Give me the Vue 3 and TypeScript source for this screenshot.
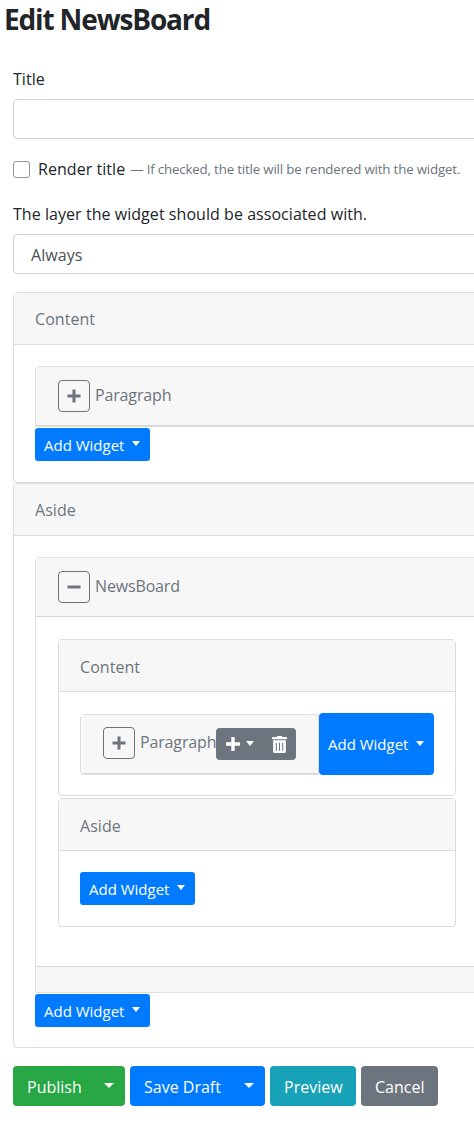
<script setup lang="ts">
const footerButtons = [
  { label: 'Preview', cls: 'teal' },
  { label: 'Cancel', cls: 'gray' },
]
</script>

<template>
  <div class="page">
    <h1 class="title">Edit NewsBoard</h1>
    <form class="form" @submit.prevent>
      <label class="label first">Title</label>
      <input class="control" type="text" />
      <div class="check-row">
        <input class="check" type="checkbox" />
        <span class="check-label">Render title</span>
        <small class="hint">— If checked, the title will be rendered with the widget.</small>
      </div>
      <label class="label layer">The layer the widget should be associated with.</label>
      <div class="control select">Always</div>

      <section class="card first-card">
        <header class="card-head">Content</header>
        <div class="card-body">
          <div class="widget">
            <div class="widget-head">
              <span class="toggle">
                <svg viewBox="0 0 16 16" class="sign"><path d="M6.500 1.500h3v5h5v3h-5v5h-3v-5h-5v-3h5z" /></svg>
              </span>
              <span class="widget-name">Paragraph</span>
            </div>
          </div>
          <button type="button" class="btn-add">Add Widget<i class="caret"></i></button>
        </div>
      </section>

      <section class="card second-card">
        <header class="card-head">Aside</header>
        <div class="card-body">
          <div class="widget">
            <div class="widget-head open">
              <span class="toggle">
                <svg viewBox="0 0 16 16" class="sign"><path d="M1.500 6.500h13v3h-13z" /></svg>
              </span>
              <span class="widget-name">NewsBoard</span>
            </div>
            <div class="widget-body">
              <section class="card inner">
                <header class="card-head">Content</header>
                <div class="card-body inline">
                  <div class="widget small">
                    <div class="widget-head">
                      <span class="toggle">
                        <svg viewBox="0 0 16 16" class="sign"><path d="M6.500 1.500h3v5h5v3h-5v5h-3v-5h-5v-3h5z" /></svg>
                      </span>
                      <span class="widget-name">Paragraph</span>
                    </div>
                    <div class="tools">
                      <svg viewBox="0 0 16 16" class="tool-plus"><path d="M6.300 1h3.400v5.300H15v3.400H9.700V15H6.300V9.700H1V6.300h5.300z" /></svg>
                      <i class="caret tool-caret"></i>
                      <svg viewBox="0 0 448 512" class="tool-trash"><path d="M32 464a48 48 0 0 0 48 48h288a48 48 0 0 0 48-48V128H32zm272-256a16 16 0 0 1 32 0v224a16 16 0 0 1-32 0zm-96 0a16 16 0 0 1 32 0v224a16 16 0 0 1-32 0zm-96 0a16 16 0 0 1 32 0v224a16 16 0 0 1-32 0zM432 32H312l-9.400-18.700A24 24 0 0 0 281.100 0H166.800a23.700 23.700 0 0 0-21.400 13.300L136 32H16A16 16 0 0 0 0 48v32a16 16 0 0 0 16 16h416a16 16 0 0 0 16-16V48a16 16 0 0 0-16-16z" /></svg>
                    </div>
                  </div>
                  <button type="button" class="btn-add tall">Add Widget<i class="caret"></i></button>
                </div>
              </section>
              <section class="card inner">
                <header class="card-head">Aside</header>
                <div class="card-body">
                  <button type="button" class="btn-add">Add Widget<i class="caret"></i></button>
                </div>
              </section>
            </div>
            <div class="widget-foot"></div>
          </div>
          <button type="button" class="btn-add">Add Widget<i class="caret"></i></button>
        </div>
      </section>

      <div class="actions">
        <button type="button" class="btn green publish">Publish<i class="caret big"></i></button>
        <button type="button" class="btn blue draft">Save Draft<i class="caret big"></i></button>
        <button v-for="b in footerButtons" :key="b.label" type="button" class="btn" :class="b.cls">{{ b.label }}</button>
      </div>
    </form>
  </div>
</template>

<style>
html, body { margin: 0; background: #fff; }
</style>

<style scoped>
.page {
  width: 474px;
  height: 1142px;
  overflow: hidden;
  font-family: "Open Sans", "Noto Sans", sans-serif;
  font-size: 16px;
  letter-spacing: 0.05px;
  color: #212529;
  box-sizing: border-box;
}
.title {
  margin: 0 0 0 4px;
  height: 38px;
  line-height: 38px;
  font-size: 28px;
  font-weight: 700;
  letter-spacing: -1.15px;
  white-space: nowrap;
}
.form { width: 490px; margin-left: 13px; }
.label { display: block; height: 24px; line-height: 24px; white-space: nowrap; }
.label.first { margin-top: 29px; margin-bottom: 8px; }
.label.layer { margin-top: 23px; margin-bottom: 8px; }
.control {
  display: block;
  box-sizing: border-box;
  width: 100%;
  height: 40px;
  margin: 0;
  padding: 0 17px;
  border: 1px solid #ced4da;
  border-radius: 4px;
  background: #fff;
  color: #495057;
  line-height: 40px;
  outline: none;
}
.check-row { display: flex; align-items: center; height: 20px; margin-top: 20px; white-space: nowrap; }
.check {
  appearance: none;
  box-sizing: border-box;
  width: 17px;
  height: 17px;
  margin: 0 8px 0 0;
  border: 1px solid #8f959b;
  border-radius: 3px;
  background: #fff;
  flex: none;
}
.hint { margin-left: 5px; font-size: 13.300px; color: #6c757d; letter-spacing: -0.17px; }

.card {
  box-sizing: border-box;
  border: 1px solid #dcdcdc;
  border-radius: 4px;
  background: #fff;
}
.first-card { margin-top: 18px; height: 191px; }
.second-card { height: 565px; }
.card-head {
  box-sizing: border-box;
  height: 52px;
  padding: 0 21px;
  line-height: 52px;
  background: #f7f7f7;
  border-bottom: 1px solid #dcdcdc;
  color: #6c757d;
}
.inner .card-head { line-height: 54px; }
.card-body { padding: 21px 21px 0; }
.widget {
  box-sizing: border-box;
  border: 1px solid #dfdfdf;
  border-radius: 4px 4px 0 0;
  background: #fff;
  margin-bottom: 1px;
}
.widget-head {
  box-sizing: border-box;
  display: flex;
  align-items: center;
  height: 59px;
  padding-left: 22px;
  background: #f7f7f7;
  border-bottom: 1px solid #d8d8d8;
  color: #6c757d;
}
.toggle {
  box-sizing: border-box;
  display: flex;
  align-items: center;
  justify-content: center;
  width: 32px;
  height: 32px;
  border: 1px solid #6c757d;
  border-radius: 4px;
  flex: none;
}
.sign { width: 16px; height: 16px; fill: #6c757d; }
.widget-name { margin-left: 5px; margin-top: -3px; letter-spacing: -0.15px; }
.btn-add {
  display: inline-flex;
  align-items: center;
  box-sizing: border-box;
  width: 115px;
  height: 33px;
  padding: 0 0 0 9px;
  border: 0;
  border-radius: 3px;
  background: #007bff;
  color: #fff;
  font-family: inherit;
  font-size: 15px;
  white-space: nowrap;
}
.caret {
  display: inline-block;
  width: 0;
  height: 0;
  margin-left: 8px;
  margin-top: -2px;
  border-top: 5px solid currentColor;
  border-left: 4.500px solid transparent;
  border-right: 4.500px solid transparent;
}
.caret.big { margin-left: 0; border-left-width: 5px; border-right-width: 5px; }

.widget-body { padding: 22px 0 39px 22px; border-bottom: 1px solid #dcdcdc; }
.inner { width: 398px; }
.inner + .inner { margin-top: 2px; height: 129px; }
.inner:first-child { height: 157px; }
.inline { display: flex; align-items: stretch; height: 103px; box-sizing: border-box; padding-top: 21px; padding-bottom: 20px; }
.widget.small {
  position: relative;
  display: flex;
  width: 239px;
  margin: 1px 0 0;
  border-radius: 4px 0 0 4px;
  flex: none;
}
.small .widget-head { height: auto; width: 100%; padding-bottom: 2px; }
.btn-add.tall { height: auto; flex: none; border-radius: 4px; }
.widget-foot { height: 25px; background: #f7f7f7; }
.tools {
  position: absolute;
  left: 135px;
  top: 13px;
  display: flex;
  align-items: center;
  box-sizing: border-box;
  width: 80px;
  height: 32px;
  padding-left: 9px;
  border-radius: 4px;
  background: #6c757d;
  color: #fff;
}
.tool-plus { width: 16px; height: 16px; fill: #fff; flex: none; }
.tool-caret { margin-left: 5px; }
.tool-trash { width: 15px; height: 17px; fill: #fff; margin-left: 18px; flex: none; }

.actions { display: flex; gap: 5px; margin-top: 18px; white-space: nowrap; }
.btn {
  display: flex;
  align-items: center;
  justify-content: space-between;
  box-sizing: border-box;
  height: 40px;
  padding: 1px 14px 0;
  border: 0;
  border-radius: 4px;
  color: #fff;
  font-family: inherit;
  font-size: 16px;
}
.green { background: #28a745; }
.blue { background: #007bff; }
.teal { background: #17a2b8; width: 86px; }
.gray { background: #6c757d; width: 77px; }
.publish { width: 112px; padding-right: 11px; }
.draft { width: 135px; padding-right: 11px; }
</style>
